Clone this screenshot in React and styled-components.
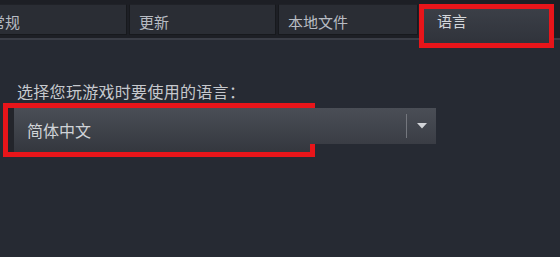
import React from "react";
import styled, { createGlobalStyle } from "styled-components";

const GlobalStyle = createGlobalStyle`
  html, body {
    margin: 0;
    background: #262a33;
    font-family: "Noto Sans CJK SC", "Noto Sans", sans-serif;
    overflow: hidden;
  }
`;

const Page = styled.div`
  width: 560px;
  height: 257px;
  background: #262a33;
  overflow: hidden;
`;

const TabBar = styled.div`
  display: flex;
  align-items: flex-start;
  gap: 2px;
  height: 34px;
  padding-top: 4px;
  margin-left: -20px;
  background: #1d1f25;
  border-bottom: 2px solid #3a3d46;
`;

const Tab = styled.div`
  box-sizing: border-box;
  display: flex;
  align-items: center;
  flex: none;
  width: ${(p) => p.$width}px;
  height: 31px;
  padding: 3px 0 0 9px;
  background: #2a2d34;
  border: 1px solid #17191d;
  border-top-color: #202228;
  color: #b8bcc3;
  font-size: 15px;
`;

const ActiveTab = styled.div`
  box-sizing: border-box;
  display: flex;
  align-items: center;
  flex: none;
  width: 125px;
  height: 34px;
  margin-top: 5px;
  margin-left: 4px;
  padding: 0 0 11px 13px;
  background: linear-gradient(to bottom, #3b3f47, #30333b);
  color: #d4d7dc;
  font-size: 15px;
  outline: 5px solid #e8151a;
`;

const Content = styled.div`
  display: flex;
  flex-direction: column;
  padding: 41px 0 0 8px;
`;

const Label = styled.div`
  padding-left: 9px;
  height: 20px;
  line-height: 20px;
  font-size: 16px;
  letter-spacing: 0.3px;
  color: #c6c9ce;
`;

const Select = styled.div`
  display: flex;
  align-items: flex-start;
  margin-top: 7px;
  width: 428px;
`;

const Value = styled.div`
  box-sizing: border-box;
  display: flex;
  align-items: center;
  width: 302px;
  height: 44px;
  padding-left: 13px;
  border-left: 6px solid #23252b;
  background: linear-gradient(to bottom, #4a4e56, #34373e);
  color: #d0d3d7;
  font-size: 16px;
  outline: 5px solid #e8151a;
`;

const Rest = styled.div`
  display: flex;
  align-items: center;
  justify-content: flex-end;
  flex: 1;
  height: 36px;
  background: linear-gradient(to bottom, #4a4e56, #3a3d45);
`;

const Divider = styled.div`
  width: 1px;
  height: 24px;
  background: #74777e;
`;

const ArrowBox = styled.div`
  display: flex;
  align-items: center;
  justify-content: center;
  width: 29px;
  height: 36px;
`;

function Arrow() {
  return (
    <svg width="10" height="6" viewBox="0 0 10 6">
      <polygon points="0,0 10,0 5,5.5" fill="#d2d4d8" />
    </svg>
  );
}

export default function App() {
  return (
    <Page>
      <GlobalStyle />
      <TabBar>
        <Tab $width={147}>常规</Tab>
        <Tab $width={147}>更新</Tab>
        <Tab $width={140}>本地文件</Tab>
        <ActiveTab>语言</ActiveTab>
      </TabBar>
      <Content>
        <Label>选择您玩游戏时要使用的语言：</Label>
        <Select>
          <Value>简体中文</Value>
          <Rest>
            <Divider />
            <ArrowBox>
              <Arrow />
            </ArrowBox>
          </Rest>
        </Select>
      </Content>
    </Page>
  );
}
